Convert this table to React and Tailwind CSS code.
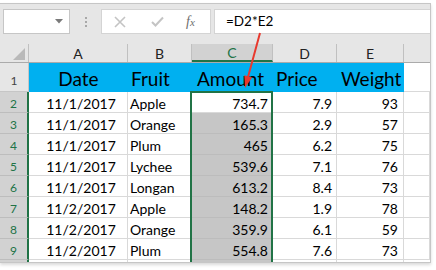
import React from "react";

const rows = [
  ["11/1/2017", "Apple", "734.7", "7.9", "93"],
  ["11/1/2017", "Orange", "165.3", "2.9", "57"],
  ["11/1/2017", "Plum", "465", "6.2", "75"],
  ["11/1/2017", "Lychee", "539.6", "7.1", "76"],
  ["11/1/2017", "Longan", "613.2", "8.4", "73"],
  ["11/2/2017", "Apple", "148.2", "1.9", "78"],
  ["11/2/2017", "Orange", "359.9", "6.1", "59"],
  ["11/2/2017", "Plum", "554.8", "7.6", "73"],
];

const letters = [
  { l: "A", w: "w-[99px]" },
  { l: "B", w: "w-[64px]" },
  { l: "C", w: "w-[81px]" },
  { l: "D", w: "w-[64px]" },
  { l: "E", w: "w-[67px]" },
];

function Toolbar() {
  return (
    <div className="h-[40px] flex items-start pt-[5px] bg-[#e6e6e6]">
      <div className="ml-[3px] w-[67px] h-[25px] bg-white border border-[#c6c6c6] flex items-center justify-end pr-[6px]">
        <svg width="8" height="5" viewBox="0 0 8 5">
          <path d="M0 0 H8 L4 4.5 Z" fill="#7a7a7a" />
        </svg>
      </div>
      <div className="w-[31px] h-[25px] flex flex-col items-center justify-center gap-[2px]">
        <span className="w-[2px] h-[2px] bg-[#a8a8a8]" />
        <span className="w-[2px] h-[2px] bg-[#a8a8a8]" />
        <span className="w-[2px] h-[2px] bg-[#a8a8a8]" />
      </div>
      <div className="w-[110px] h-[25px] bg-white border border-[#d4d4d4] flex items-center">
        <svg className="ml-[12px]" width="12" height="12" viewBox="0 0 12 12">
          <path d="M1 1 L11 11 M11 1 L1 11" stroke="#c4c4c4" strokeWidth="1.6" />
        </svg>
        <svg className="ml-[25px]" width="13" height="11" viewBox="0 0 13 11">
          <path d="M1 6 L4.5 9.5 L12 1.5" stroke="#c4c4c4" strokeWidth="2" fill="none" />
        </svg>
        <span className="ml-[22px] text-[14px] italic text-[#6e6e6e] font-['Liberation_Serif',serif] leading-none">
          f<span className="text-[11px]">x</span>
        </span>
      </div>
      <div className="ml-[3px] flex-1 h-[25px] bg-white border-y border-l border-[#d4d4d4] flex items-center pl-[11px] text-[13.5px] text-black">
        =D2*E2
      </div>
    </div>
  );
}

function HeaderRow() {
  return (
    <div className="flex h-[19px] bg-[#e6e6e6] border-b border-[#ababab] text-[14px] leading-none">
      <div className="w-[29px] h-full border-r border-[#c0c0c0] flex items-end justify-end pr-[3px] pb-[2px]">
        <svg width="12" height="12" viewBox="0 0 12 12">
          <path d="M12 0 V12 H0 Z" fill="#b9b9b9" />
        </svg>
      </div>
      {letters.map((c) =>
        c.l === "C" ? (
          <div
            key={c.l}
            className={`${c.w} h-full bg-[#d2d2d2] border-r border-b-2 border-r-[#c0c0c0] border-b-[#217346] flex items-center justify-center pt-[2px] text-[#217346]`}
          >
            {c.l}
          </div>
        ) : (
          <div
            key={c.l}
            className={`${c.w} h-full border-r border-[#c0c0c0] flex items-center justify-center pt-[2px] text-[#222]`}
          >
            {c.l}
          </div>
        )
      )}
      <div className="flex-1 h-full" />
    </div>
  );
}

function TitleRow() {
  return (
    <div className="flex h-[29px] text-[19px] leading-none text-black">
      <div className="w-[29px] h-full bg-[#e6e6e6] border-r border-b border-[#c6c6c6] flex items-end justify-center pb-[4px] text-[12px] text-[#444]">
        1
      </div>
      <div className="w-[99px] h-full bg-[#00b0f0] flex items-end justify-center pb-[4px]">Date</div>
      <div className="w-[64px] h-full bg-[#00b0f0] flex items-end pl-[3px] pb-[4px]">Fruit</div>
      <div className="w-[81px] h-full bg-[#00b0f0] flex items-end pl-[5px] pb-[4px] whitespace-nowrap">Amount</div>
      <div className="w-[64px] h-full bg-[#00b0f0] flex items-end pl-[3px] pb-[4px]">Price</div>
      <div className="w-[67px] h-full bg-[#00b0f0] flex items-end pl-[4px] pb-[4px]">Weight</div>
      <div className="flex-1 h-full bg-white border-b border-[#d9d9d9]" />
    </div>
  );
}

function DataRow({ n, r }) {
  const cell = "h-full border-r border-b border-[#d9d9d9] flex items-end pb-[1px]";
  return (
    <div className="flex h-[21px] text-[14px] leading-none text-black">
      <div className="w-[29px] h-full bg-[#d2d2d2] border-b border-b-[#bdbdbd] border-r-2 border-r-[#217346] flex items-end justify-center pb-[2px] text-[12px] text-[#217346]">
        {n}
      </div>
      <div className={`w-[99px] ${cell} justify-center pl-[6px]`}>{r[0]}</div>
      <div className={`w-[64px] ${cell} pl-[2px]`}>{r[1]}</div>
      <div className={`w-[81px] ${cell} justify-end pr-[4px] ${n === 2 ? "bg-white" : "bg-[#c6c6c6] border-b-[#bcbcbc]"}`}>
        {r[2]}
      </div>
      <div className={`w-[64px] ${cell} justify-end pr-[4px]`}>{r[3]}</div>
      <div className={`w-[67px] ${cell} justify-end pr-[5px]`}>{r[4]}</div>
      <div className={`flex-1 ${cell}`} />
    </div>
  );
}

export default function App() {
  return (
    <div className="relative w-[436px] h-[270px] bg-white overflow-hidden font-['Lato',sans-serif]">
      <div className="relative mt-[3px] w-[431px] h-[260px] border-t border-r border-b border-[#c6c6c6] bg-white overflow-hidden shadow-[0_2px_3px_rgba(0,0,0,0.15)]">
        <Toolbar />
        <HeaderRow />
        <TitleRow />
        {rows.map((r, i) => (
          <DataRow key={i} n={i + 2} r={r} />
        ))}
        <div className="flex h-[3px]">
          <div className="w-[29px] h-full bg-[#d2d2d2] border-r-2 border-r-[#217346]" />
          <div className="w-[99px] h-full border-r border-[#d9d9d9]" />
          <div className="w-[64px] h-full border-r border-[#d9d9d9]" />
          <div className="w-[81px] h-full bg-[#c6c6c6]" />
          <div className="w-[64px] h-full border-r border-[#d9d9d9]" />
          <div className="w-[67px] h-full border-r border-[#d9d9d9]" />
        </div>
        <div className="absolute left-[190px] top-[87px] w-[83px] h-[200px] border-x-2 border-t-2 border-[#217346]" />
      </div>
      <svg className="absolute left-0 top-0 pointer-events-none" width="436" height="270" viewBox="0 0 436 270">
        <line x1="260" y1="33" x2="248" y2="77" stroke="#e8392e" strokeWidth="2" />
        <path d="M245 88 L252.1 77.5 L244.3 75.3 Z" fill="#e8392e" />
      </svg>
    </div>
  );
}
